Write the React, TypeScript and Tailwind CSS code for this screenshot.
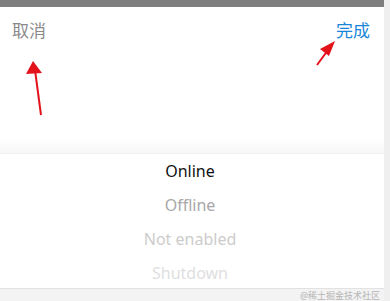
const options = [
  { label: "Online", color: "text-[#111111]" },
  { label: "Offline", color: "text-[#a8a8a8]" },
  { label: "Not enabled", color: "text-[#cccccc]" },
  { label: "Shutdown", color: "text-[#e0e0e0]" },
];

function Arrows() {
  // red annotation arrows drawn over the screenshot
  return (
    <svg className="pointer-events-none absolute inset-0" width="390" height="301" viewBox="0 0 390 301">
      <line x1="41" y1="115" x2="35" y2="70" stroke="#e3131b" strokeWidth="2" />
      <polygon points="33,61 26,74 42,73" fill="#e3131b" />
      <line x1="317" y1="65" x2="328" y2="50" stroke="#e3131b" strokeWidth="2" />
      <polygon points="335,41 320,49 329,56" fill="#e3131b" />
    </svg>
  );
}

export default function App() {
  return (
    <div
      className="relative flex h-[301px] w-[390px] overflow-hidden bg-white"
      style={{ fontFamily: '"Noto Sans", "Noto Sans CJK SC", sans-serif' }}
    >
      <div className="flex w-[384px] flex-col">
        <div className="h-[7px] bg-[#7f7f7f]" />
        <div className="flex h-[48px] items-center justify-between pl-3 pr-[14px]">
          <button className="text-[17px] leading-6 text-[#8a8a8a]">取消</button>
          <button className="text-[17px] leading-6 text-[#1a86d9]">完成</button>
        </div>
        <div className="h-[85px]" />
        <div className="h-[13px] bg-gradient-to-b from-white to-[#f7f7f7]" />
        <div className="h-[135px] overflow-hidden border-t border-[#f0f0f0]">
          {options.map((o) => (
            <div key={o.label} className={`flex h-[34px] items-center justify-center pr-1 text-[16px] ${o.color}`}>
              {o.label}
            </div>
          ))}
        </div>
        <div className="flex flex-1 items-center justify-end border-t border-[#e2e2e2] bg-[#f3f3f3] pr-1">
          <span className="text-[9px] leading-none text-[#b5b5b5]">@稀土掘金技术社区</span>
        </div>
      </div>
      <div className="w-[6px] bg-[#efefef]" />
      <Arrows />
    </div>
  );
}
